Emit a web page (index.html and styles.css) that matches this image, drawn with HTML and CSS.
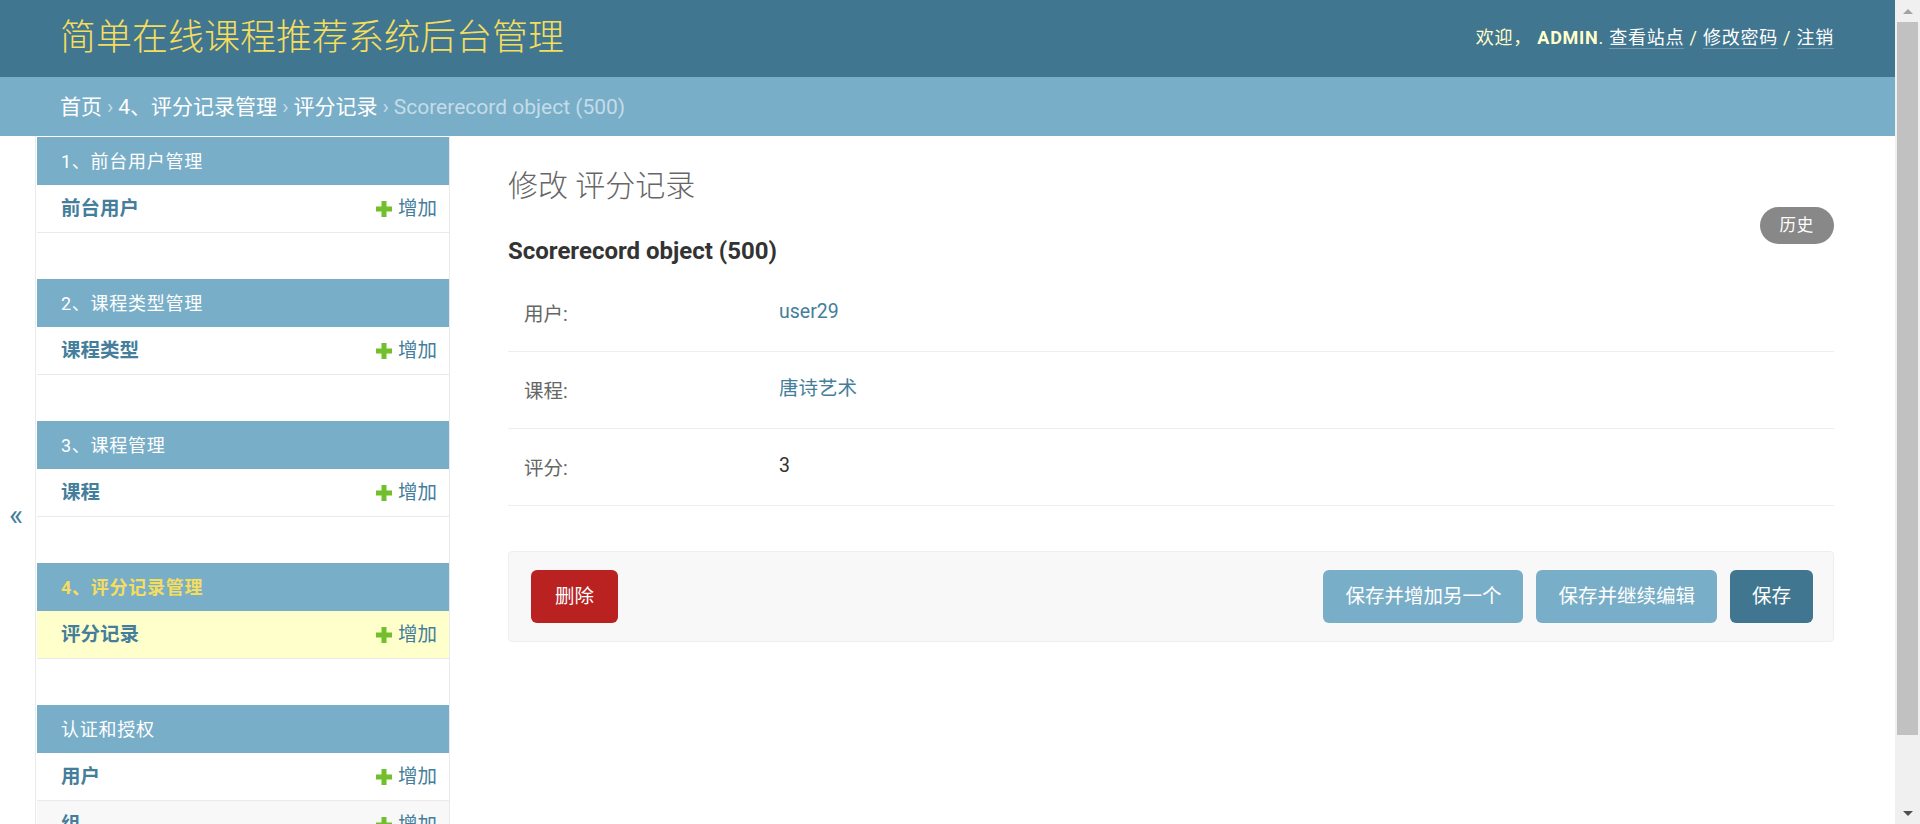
FILE: index.html
```html
<!DOCTYPE html>
<html lang="zh-CN">
<head>
<meta charset="utf-8">
<title>修改 评分记录 | 简单在线课程推荐系统后台管理</title>
<link rel="stylesheet" href="styles.css">
</head>
<body>
<div class="viewport">
  <div class="page">
    <header class="header">
      <div class="branding">简单在线课程推荐系统后台管理</div>
      <div class="user-tools">欢迎， <strong>ADMIN</strong>. <a href="#">查看站点</a> / <a href="#">修改密码</a> / <a href="#">注销</a></div>
    </header>
    <nav class="breadcrumbs">
      <a href="#">首页</a><span class="sep">›</span><a href="#">4、评分记录管理</a><span class="sep">›</span><a href="#">评分记录</a><span class="sep">›</span><span>Scorerecord object (500)</span>
    </nav>
    <div class="main">
      <div class="toggle">«</div>
      <aside class="sidebar">
        <div class="module">
          <div class="module-caption">1、前台用户管理</div>
          <div class="module-row"><span class="model">前台用户</span><span class="addlink"><svg viewBox="0 0 16 16"><path d="M5.5 0h5v5.5h5.5v5h-5.5v5.5h-5v-5.5h-5.5v-5h5.5z"/></svg>增加</span></div>
        </div>
        <div class="module">
          <div class="module-caption">2、课程类型管理</div>
          <div class="module-row"><span class="model">课程类型</span><span class="addlink"><svg viewBox="0 0 16 16"><path d="M5.5 0h5v5.5h5.5v5h-5.5v5.5h-5v-5.5h-5.5v-5h5.5z"/></svg>增加</span></div>
        </div>
        <div class="module">
          <div class="module-caption">3、课程管理</div>
          <div class="module-row"><span class="model">课程</span><span class="addlink"><svg viewBox="0 0 16 16"><path d="M5.5 0h5v5.5h5.5v5h-5.5v5.5h-5v-5.5h-5.5v-5h5.5z"/></svg>增加</span></div>
        </div>
        <div class="module">
          <div class="module-caption current">4、评分记录管理</div>
          <div class="module-row current"><span class="model">评分记录</span><span class="addlink"><svg viewBox="0 0 16 16"><path d="M5.5 0h5v5.5h5.5v5h-5.5v5.5h-5v-5.5h-5.5v-5h5.5z"/></svg>增加</span></div>
        </div>
        <div class="module">
          <div class="module-caption">认证和授权</div>
          <div class="module-row"><span class="model">用户</span><span class="addlink"><svg viewBox="0 0 16 16"><path d="M5.5 0h5v5.5h5.5v5h-5.5v5.5h-5v-5.5h-5.5v-5h5.5z"/></svg>增加</span></div>
          <div class="module-row alt"><span class="model">组</span><span class="addlink"><svg viewBox="0 0 16 16"><path d="M5.5 0h5v5.5h5.5v5h-5.5v5.5h-5v-5.5h-5.5v-5h5.5z"/></svg>增加</span></div>
        </div>
      </aside>
      <main class="content">
        <h1 class="title">修改 评分记录</h1>
        <div class="subhead">
          <h2 class="subtitle">Scorerecord object (500)</h2>
          <a class="history" href="#">历史</a>
        </div>
        <div class="fieldset">
          <div class="form-row"><div class="label">用户:</div><div class="value link">user29</div></div>
          <div class="form-row"><div class="label">课程:</div><div class="value link">唐诗艺术</div></div>
          <div class="form-row"><div class="label">评分:</div><div class="value">3</div></div>
        </div>
        <div class="submit-row">
          <a class="btn btn-delete" href="#">删除</a>
          <span class="btn btn-secondary">保存并增加另一个</span>
          <span class="btn btn-secondary">保存并继续编辑</span>
          <span class="btn btn-default">保存</span>
        </div>
      </main>
    </div>
  </div>
  <div class="scrollbar">
    <div class="sb-btn"><span class="tri-up"></span></div>
    <div class="sb-thumb"></div>
    <div class="sb-track"></div>
    <div class="sb-btn sb-down"><span class="tri-down"></span></div>
  </div>
</div>
</body>
</html>
```
FILE: styles.css
```css
* { box-sizing: border-box; }
html, body { margin: 0; padding: 0; }
body {
  font-family: Roboto, "Noto Sans CJK SC", sans-serif;
  color: #333;
  background: #fff;
  overflow: hidden;
}
a { text-decoration: none; }

.viewport { display: flex; width: 1920px; height: 824px; }
.page { flex: 1; min-width: 0; display: flex; flex-direction: column; overflow: hidden; }

/* header */
.header {
  height: 77px;
  flex-shrink: 0;
  background: #417690;
  display: flex;
  align-items: center;
  justify-content: space-between;
  padding: 0 61px 2px 60px;
}
.branding { color: #f5dd5d; font-size: 36px; font-weight: 300; line-height: 44px; }
.user-tools { color: #ffc; font-size: 18px; letter-spacing: 0.75px; line-height: 26px; }
.user-tools strong { font-weight: 700; }
.user-tools a { color: #fff; border-bottom: 1px solid rgba(255, 255, 255, 0.25); }

/* breadcrumbs */
.breadcrumbs {
  height: 59px;
  flex-shrink: 0;
  background: #79aec8;
  color: #c4dce8;
  padding: 0 60px;
  display: flex;
  align-items: center;
  font-size: 21px;
  line-height: 28px;
  white-space: pre;
}
.breadcrumbs a { color: #fff; }
.breadcrumbs .sep { margin: 0 5px; }

/* main layout */
.main { flex: 1; display: flex; min-height: 0; }
.toggle {
  width: 36px;
  flex-shrink: 0;
  border-right: 1px solid #eaeaea;
  color: #447e9b;
  font-size: 30px;
  line-height: 30px;
  padding: 364px 0 0 9px;
}
.sidebar {
  width: 414px;
  flex-shrink: 0;
  border-right: 1px solid #eaeaea;
  padding: 1px 0 0 1px;
}
.module { margin-bottom: 46px; }
.module-caption {
  height: 48px;
  line-height: 49px;
  background: #79aec8;
  color: #fff;
  font-size: 18px;
  letter-spacing: 0.75px;
  padding-left: 24px;
}
.module-caption.current { color: #f5dd5d; font-weight: 700; }
.module-row {
  height: 48px;
  border-bottom: 1px solid #eaeaea;
  display: flex;
  align-items: center;
  justify-content: space-between;
  padding: 1px 12px 0 24px;
  font-size: 19.5px;
  line-height: 24px;
}
.module-row.current { background: #ffc; }
.module-row.alt { background: #f8f8f8; }
.model { font-weight: 700; color: #447e9b; }
.addlink { color: #447e9b; display: flex; align-items: center; gap: 6px; }
.addlink svg { width: 16px; height: 16px; fill: #70bf2b; }

/* content */
.content { flex: 1; min-width: 0; padding: 30px 61px 0 58px; }
.title { margin: 0; font-size: 30px; font-weight: 300; color: #666; line-height: 40px; }
.subhead { display: flex; justify-content: space-between; align-items: flex-start; }
.subtitle { margin: 0; padding-top: 30px; font-size: 24px; font-weight: 700; color: #333; line-height: 30px; }
.history {
  margin-top: 1px;
  height: 37px;
  line-height: 37px;
  padding: 0 20px;
  border-radius: 19px;
  background: #888;
  color: #fff;
  font-size: 16.5px;
  letter-spacing: 0.75px;
}
.fieldset { margin-top: 9px; }
.form-row { height: 77px; border-bottom: 1px solid #eee; display: flex; font-size: 19.5px; line-height: 20px; }
.label { width: 271px; padding: 30px 0 0 16px; color: #666; }
.value { padding-top: 27px; color: #333; }
.value.link { color: #447e9b; }

.submit-row {
  margin-top: 45px;
  background: #f8f8f8;
  border: 1px solid #eee;
  border-radius: 4px;
  padding: 18px 20px 18px 22px;
  display: flex;
  align-items: center;
  gap: 13px;
}
.btn {
  height: 53px;
  line-height: 53px;
  padding: 0 22px;
  border-radius: 6px;
  color: #fff;
  font-size: 19.5px;
}
.btn-delete { background: #ba2121; margin-right: auto; padding: 0 24px; }
.btn-secondary { background: #79aec8; }
.btn-default { background: #417690; }

/* fake scrollbar */
.scrollbar {
  width: 25px;
  flex-shrink: 0;
  background: #f0f0f0;
  display: flex;
  flex-direction: column;
  align-items: center;
}
.sb-btn { height: 22px; width: 100%; display: flex; align-items: center; justify-content: center; flex-shrink: 0; }
.sb-thumb { width: 21px; height: 713px; background: #c1c1c1; flex-shrink: 0; }
.sb-track { flex: 1; }
.tri-up { width: 0; height: 0; border-left: 5px solid transparent; border-right: 5px solid transparent; border-bottom: 5px solid #a3a3a3; }
.tri-down { width: 0; height: 0; border-left: 5px solid transparent; border-right: 5px solid transparent; border-top: 5px solid #505050; }
```
